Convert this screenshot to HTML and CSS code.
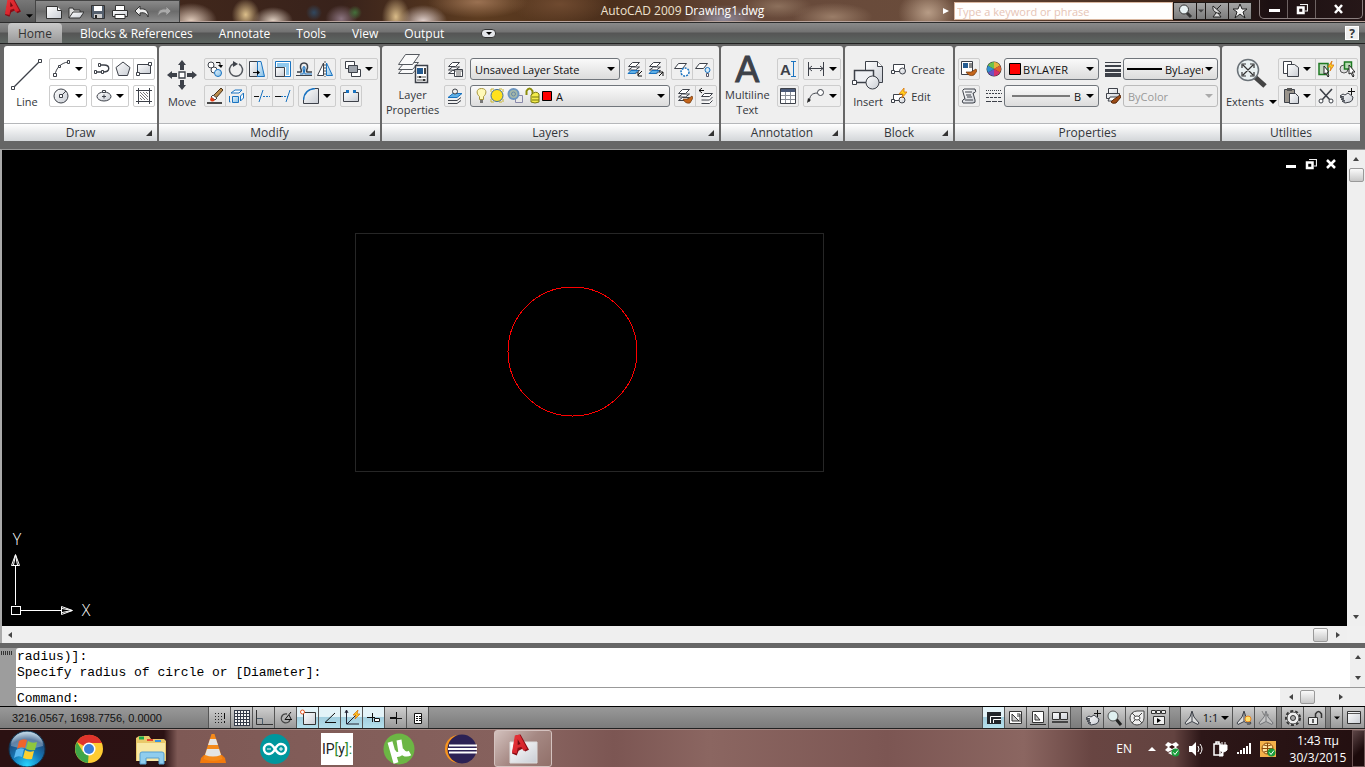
FILE: index.html
```html
<!DOCTYPE html>
<html lang="en">
<head>
    <meta charset="utf-8">
    <title>AutoCAD 2009 Drawing1.dwg</title>
    <link rel="stylesheet" href="styles.css">
</head>
<body>
    <svg width="0" height="0" class="defs">
        <defs>
            <linearGradient id="paper" x1="0" y1="0" x2="1" y2="1"><stop offset="0" stop-color="#fff"/><stop offset="1" stop-color="#c9cdd4"/></linearGradient>
            <linearGradient id="sky" x1="0" y1="0" x2="1" y2="1"><stop offset="0" stop-color="#eaf5fd"/><stop offset="1" stop-color="#7fbde6"/></linearGradient>
            <radialGradient id="orb" cx=".5" cy=".95" r=".9"><stop offset="0" stop-color="#27d6ff"/><stop offset=".45" stop-color="#1579b8"/><stop offset=".8" stop-color="#1d4a7c"/><stop offset="1" stop-color="#9fc0d6"/></radialGradient>
            <linearGradient id="red" x1="0" y1="0" x2="1" y2="1"><stop offset="0" stop-color="#e8363a"/><stop offset="1" stop-color="#d01c26"/></linearGradient>
        </defs>
        <symbol id="down" viewBox="0 0 8 4"><path d="M0 0h8L4 4z"/></symbol>
        <symbol id="layers" viewBox="0 0 16 16"><g fill="#fff" stroke="#3d4149"><path d="M1.500 12.500h7l4-3h-7z"/><path d="M1.500 9h7l4-3h-7z"/><path d="M1.500 5.500h7l4-4h-7z"/></g></symbol>
        <symbol id="hand" viewBox="0 0 16 16"><path d="M1 8l3-2 2 1 3-2 5 4q0 4-3 5l-5 1-3-2h3l-4-2h3l-4-2h4z" fill="url(#paper)" stroke="#3d4149"/><path d="M12.500 0v7M9 3.500h7" stroke="#111"/></symbol>
        <symbol id="restore" viewBox="0 0 12 12"><path d="M4 1.500h7.500V8H9" fill="none" stroke="#eee" stroke-width="1.200"/><path d="M2 4.500h5.500V10H2z" fill="none" stroke="#fff" stroke-width="2.500"/></symbol>
        <symbol id="logo" viewBox="0 0 18 22"><path d="M4 1l5-1 9 16-4 2-3-3-4 2-2 5-5-2z" fill="#8a0c14"/><path d="M3 1l5-1 8 15-4 2-2-4-4 1-1 6-5-1z" fill="url(#red)"/><path d="M6 5l3 5-3 1z" fill="#6e0a10"/></symbol>
        <symbol id="scale" viewBox="0 0 16 16"><path d="M8 1l2 6 5 6-1 1.500-6-3-6 3L1 13l5-6z" fill="#ddd" stroke="#3d4149"/><path d="M8 2v9" stroke="#3d4149"/></symbol>
    </svg>

    <header class="titlebar">
        <div class="titlebar-left">
            <button class="app-button" aria-label="Menu">
                <svg width="16" height="17" viewBox="0 3 16 17"><use href="#logo" width="16" height="20"/></svg>
                <svg class="app-arrow" width="7" height="4"><use href="#down"/></svg>
            </button>
            <div class="quick">
                <button aria-label="New"><svg width="16" height="16"><path d="M.500 2.500h11l4 4v8H.500z" fill="url(#paper)" stroke="#333"/><path d="M11.500 2.500v4h4" fill="#fff" stroke="#333"/></svg></button>
                <button aria-label="Open"><svg width="16" height="16"><path d="M1 14V4h4l1 2h6v2" fill="#ddd" stroke="#333"/><path d="M1 14l4-6h11l-4 6z" fill="url(#paper)" stroke="#333"/></svg></button>
                <button aria-label="Save"><svg width="16" height="16"><path d="M1.500 1.500h13v13H3l-1.500-1.500z" fill="#55606e" stroke="#333"/><path d="M4 2h8v5H4z" fill="#fff"/><path d="M4 10h8v4H4z" fill="#ccc"/><path d="M5 11h2v3H5z" fill="#222"/></svg></button>
                <button aria-label="Print"><svg width="16" height="16"><path d="M3.500 6V1.500h9V6" fill="#fff" stroke="#333"/><path d="M.500 6.500h15v6H.500z" fill="url(#paper)" stroke="#333"/><path d="M3 10.500h10v4H3z" fill="#fff" stroke="#333"/></svg></button>
                <button aria-label="Undo"><svg width="16" height="16"><path d="M6 2v3c6-1 9 3 8 8-1-3-3-5-8-4v3L1 7z" fill="#eee" stroke="#333"/></svg></button>
                <button aria-label="Redo"><svg width="16" height="16"><path d="M10 2v3C4 4 1 8 2 13c1-3 3-5 8-4v3l5-5z" fill="#aaa" stroke="#777"/></svg></button>
            </div>
        </div>
        <h1 class="title">AutoCAD 2009 <span>Drawing1.dwg</span></h1>
        <div class="titlebar-right">
            <svg width="6" height="8" class="search-arrow"><path d="M0 1l6 3-6 3z" fill="#fff"/></svg>
            <input class="search" type="text" placeholder="Type a keyword or phrase" aria-label="Type a keyword or phrase">
            <div class="info-tools">
                <button aria-label="Search"><svg width="16" height="16"><path d="M9 9l5 5" stroke="#333" stroke-width="3"/><circle cx="7" cy="6.500" r="4.500" fill="#e8f2f4" stroke="#333"/></svg></button>
                <button class="narrow" aria-label="Search options"><svg width="6" height="4"><use href="#down" fill="#444"/></svg></button>
                <button aria-label="Communication Center"><svg width="16" height="16"><path d="M4 3c-1 5 3 8 8 7zM7 10l-3 4h8l-3-4M8 6l4-4" fill="#ddd" stroke="#222"/></svg></button>
                <button aria-label="Favorites"><svg width="16" height="16"><path d="M8 1l2 5h5l-4 3 2 6-5-4-5 4 2-6-4-3h5z" fill="#f4f4f4" stroke="#222"/></svg></button>
            </div>
            <div class="window-controls">
                <button aria-label="Minimize"><svg width="12" height="12"><path d="M1 6h11v3H1z" fill="#fff"/></svg></button>
                <button aria-label="Restore"><svg width="12" height="12"><use href="#restore"/></svg></button>
                <button class="close" aria-label="Close"><svg width="12" height="12"><path d="M2 2l7 8M9 2l-7 8" stroke="#fff" stroke-width="2.500"/></svg></button>
            </div>
        </div>
    </header>

    <nav class="tabs">
        <a class="active" href="#home">Home</a>
        <a href="#blocks">Blocks &amp; References</a>
        <a href="#annotate">Annotate</a>
        <a href="#tools">Tools</a>
        <a href="#view">View</a>
        <a href="#output">Output</a>
        <button class="pill" aria-label="Minimize ribbon"><svg width="6" height="3"><use href="#down"/></svg></button>
        <button class="help" aria-label="Help">?</button>
    </nav>

    <main class="ribbon">
        <section class="panel white">
            <div class="panel-body">
                <button class="big"><svg width="34" height="34"><path d="M4 29L29 4" stroke="#3d4149" stroke-width="1.300"/><path d="M1.500 28.500h3v3h-3zM28.500 1.500h3v3h-3z" fill="#fff" stroke="#3d4149"/></svg>Line</button>
                <div class="rows">
                    <div class="row">
                        <div class="group"><button class="drop" aria-label="Arc"><svg width="18" height="18"><path d="M2 15C3 8 8 3 15 2" fill="none" stroke="#3d4149"/><path d="M.500 13.500h3v3h-3zM5.500 5.500h2v2h-2zM14.500.500h2v3h-2z" fill="#fff" stroke="#3d4149"/></svg><svg width="8" height="4"><use href="#down"/></svg></button></div>
                        <div class="group"><button aria-label="Polyline"><svg width="16" height="16"><path d="M2 11h7c8 0 7-7 1-7H7" fill="none" stroke="#3d4149" stroke-width="1.400"/><path d="M.500 9.500h2v3h-2zM7.500 9.500h2v3h-2zM4.500 2.500h2v3h-2z" fill="#fff" stroke="#3d4149"/></svg></button><button aria-label="Polygon"><svg width="16" height="16"><path d="M8 1l7 5.500-2.500 8h-9L1 6.500z" fill="url(#paper)" stroke="#3d4149"/></svg></button><button aria-label="Rectangle"><svg width="16" height="16"><path d="M1.500 3.500h13v9h-13z" fill="url(#paper)" stroke="#3d4149"/><path d="M.500 11.500h3v3h-3zM12.500 1.500h3v3h-3z" fill="#fff" stroke="#3d4149"/></svg></button></div>
                    </div>
                    <div class="row">
                        <div class="group"><button class="drop" aria-label="Circle"><svg width="18" height="18"><circle cx="8" cy="9" r="7" fill="url(#paper)" stroke="#3d4149"/><path d="M8 9l5-5" stroke="#3d4149"/><path d="M6.500 7.500h3v3h-3z" fill="#fff" stroke="#3d4149"/></svg><svg width="8" height="4"><use href="#down"/></svg></button></div>
                        <div class="group"><button class="drop" aria-label="Ellipse"><svg width="16" height="16"><ellipse cx="8" cy="8.500" rx="7" ry="4.500" fill="url(#paper)" stroke="#3d4149"/><path d="M6 8.500h4M8 6.500v4" stroke="#3d4149"/><path d="M6.500 2.500h3v2h-3z" fill="#fff" stroke="#3d4149"/></svg><svg width="8" height="4"><use href="#down"/></svg></button></div>
                        <div class="group"><button aria-label="Hatch"><svg width="16" height="16"><path d="M0 2.500h16M0 13.500h16M2.500 0v16M13.500 0v16" stroke="#3d4149"/><path d="M4 4l8 8M4 7l5 5M4 10l2 2M7 4l5 5M10 4l2 2" stroke="#777"/></svg></button></div>
                    </div>
                </div>
            </div>
            <h2>Draw<i></i></h2>
        </section>

        <section class="panel">
            <div class="panel-body">
                <button class="big"><svg width="34" height="34"><path d="M17 2l4 5h-2v5h-4V7h-2zM17 32l4-5h-2v-5h-4v5h-2zM2 17l5-4v2h5v4H7v2zM32 17l-5-4v2h-5v4h5v2z" fill="#3d4149"/><path d="M14 14h6v6h-6z" fill="#fff" stroke="#3d4149" stroke-width="1.300"/></svg>Move</button>
                <div class="rows">
                    <div class="row">
                        <div class="group"><button aria-label="Copy"><svg width="16" height="16"><circle cx="4" cy="4" r="3" fill="#fff" stroke="#3d4149"/><circle cx="7" cy="9" r="3" fill="#fff" stroke="#3d4149"/><circle cx="11" cy="12" r="3.500" fill="url(#sky)" stroke="#1a73c0"/><path d="M9 1.500h4v3" stroke="#111" fill="none"/><path d="M11 4h5l-2 3z"/></svg></button><button aria-label="Rotate"><svg width="16" height="16"><path d="M11 3a6.500 6.500 0 1 1-6 0" fill="none" stroke="#55595f" stroke-width="1.500"/><path d="M5 0l5 3-5 3z" fill="#3d4149"/></svg></button><button aria-label="Stretch"><svg width="16" height="16"><path d="M.500.500h8v15h-8z" fill="url(#paper)" stroke="#3d4149"/><path d="M8.500.500H12l3.500 15h-7z" fill="url(#sky)" stroke="#1a73c0"/><path d="M4 11.500h5" stroke="#111"/><path d="M8 9l3 2.500L8 14z"/></svg></button></div>
                        <div class="group"><button aria-label="Scale"><svg width="16" height="16"><path d="M.500.500h15v15h-15z" fill="#fff" stroke="#1a73c0"/><path d="M2 2h12v4H2zM11 6h3v8h-3z" fill="#8fc9ef"/><path d="M.500 6.500h9v9h-9z" fill="url(#paper)" stroke="#3d4149"/></svg></button><button aria-label="Offset"><svg width="16" height="16"><path d="M0 14.500h16" fill="none" stroke="#3d4149"/><path d="M1 11h4q1-1-.500-4Q4 2 8 2t3.500 5q-1.500 3-.500 4h5" fill="none" stroke="#3d4149" stroke-width="1.500"/><path d="M4 13h3q1-2 0-6 1-3 2 0-1 4 0 6h7" fill="none" stroke="#1a73c0" stroke-width="1.200"/></svg></button><button aria-label="Mirror"><svg width="16" height="16"><path d="M6.500 2v12.500H.500z" fill="#fff" stroke="#3d4149"/><path d="M9.500 2v12.500h6z" fill="url(#sky)" stroke="#1a73c0"/><path d="M8 0v16" stroke="#555" stroke-dasharray="2 1"/></svg></button></div>
                        <div class="group"><button class="drop" aria-label="Draw order"><svg width="16" height="16"><path d="M.500.500h9v7h-9zM6.500 8.500h9v7h-9z" fill="#fff" stroke="#3d4149"/><path d="M3.500 4.500h9v7h-9z" fill="#9da3ab" stroke="#3d4149"/></svg><svg width="8" height="4"><use href="#down"/></svg></button></div>
                    </div>
                    <div class="row">
                        <div class="group"><button aria-label="Erase"><svg width="16" height="16"><path d="M6 8l8-8 2 2-7 8z" fill="#b98a4c" stroke="#4b3418"/><path d="M6 7l4 3-2 2-4-3z" fill="#fff" stroke="#444"/><path d="M4 9l4 3q-3 3-5 0z" fill="#e23a12"/><path d="M0 15h15" stroke="#111" stroke-width="1.500"/></svg></button><button aria-label="Explode"><svg width="16" height="16"><path d="M4.500 8.500h6v6h-6z" fill="url(#sky)" stroke="#1a73c0"/><path d="M3 5l4-3h7l-3 3zM12.500 8l3-3v5l-3 3zM1.500 8v6h1" fill="#f4faff" stroke="#1a73c0"/></svg></button></div>
                        <div class="group"><button aria-label="Trim"><svg width="16" height="16"><path d="M0 8.500h5" stroke="#111"/><path d="M9 8.500h7" stroke="#1a73c0" stroke-dasharray="2 1"/><path d="M5 14L9 2" stroke="#1a73c0"/></svg></button><button aria-label="Extend"><svg width="16" height="16"><path d="M0 8.500h6" stroke="#111"/><path d="M6 8.500h7" stroke="#1a73c0" stroke-dasharray="2 1"/><path d="M11 14l4-12" stroke="#1a73c0"/></svg></button></div>
                        <div class="group"><button class="drop" aria-label="Fillet"><svg width="16" height="16"><path d="M.500 15.500V12C1 5 5 1 12 .500h3.500v15z" fill="url(#paper)"/><path d="M.500 12C1 5 5 1 12 .500" fill="none" stroke="#1a73c0" stroke-width="1.500"/><path d="M.500 12v3.500h15V.500H12" fill="none" stroke="#3d4149"/></svg><svg width="8" height="4"><use href="#down"/></svg></button></div>
                        <div class="group"><button aria-label="Break"><svg width="16" height="16"><path d="M5 4.500H.500v9h15v-9H11" fill="url(#paper)" stroke="#3d4149"/><path d="M3 2h3v3H3zM10 2h3v3h-3z" fill="#1a73c0"/></svg></button></div>
                    </div>
                </div>
            </div>
            <h2>Modify<i></i></h2>
        </section>

        <section class="panel">
            <div class="panel-body">
                <button class="big tall"><svg width="34" height="34"><g fill="#fafafa" stroke="#55595f"><path d="M2.500 22.500h14l6-7h-14z"/><path d="M2.500 18.500h14l6-7h-14z"/><path d="M2.500 13.500h14l7-10h-14z"/></g><path d="M19.500 14.500h12v17h-12z" fill="#fff" stroke="#3d4149" stroke-width="1.500"/><path d="M21 17h6v6h-6z" fill="#245b91"/><path d="M28 17h2v6h-2z" fill="#444"/><path d="M21 26h9M21 29h9" stroke="#555"/><path d="M23 25h2v2h-2zM27 28h2v2h-2z" fill="#333"/></svg>Layer<br>Properties</button>
                <div class="rows">
                    <div class="row">
                        <div class="group"><button aria-label="Layer states manager"><svg width="16" height="16"><use href="#layers" width="16" height="16"/><path d="M7.500 8.500h8v7h-8z" fill="#fff" stroke="#3d4149"/><path d="M8 10h7M9 12h5M9 14h5" stroke="#666"/></svg></button></div>
                        <div class="combo state"><select aria-label="Layer state"><option>Unsaved Layer State</option></select><svg width="8" height="4"><use href="#down"/></svg></div>
                        <div class="group"><button aria-label="Layer isolate"><svg width="16" height="16"><use href="#layers" width="16" height="16"/><path d="M1 12.500h7l3-3H4z" fill="#5fb0e6" stroke="#1a73c0"/><path d="M15 10l-4 4M11 11v4h4" stroke="#111" fill="none"/></svg></button><button aria-label="Layer unisolate"><svg width="16" height="16"><use href="#layers" width="16" height="16"/><path d="M1 12.500h7l3-3H4z" fill="#5fb0e6" stroke="#1a73c0"/><path d="M11 15l4-4M11 11h4v4" stroke="#111" fill="none"/></svg></button></div>
                        <div class="group"><button aria-label="Freeze layer"><svg width="16" height="16"><path d="M.500 7.500h8l4-5h-8z" fill="#fff" stroke="#3d4149"/><circle cx="11" cy="11" r="4" fill="#fff" stroke="#1a73c0" stroke-width="1.500" stroke-dasharray="2 1"/></svg></button><button aria-label="Layer off"><svg width="16" height="16"><path d="M.500 7.500h8l4-5h-8z" fill="#fff" stroke="#3d4149"/><circle cx="12.500" cy="9" r="2.500" fill="#d6ebfa" stroke="#1a73c0"/><path d="M11.500 12.500h2v3h-2z" fill="#fff" stroke="#556"/></svg></button></div>
                    </div>
                    <div class="row">
                        <div class="group"><button aria-label="Make current"><svg width="16" height="16"><path d="M1 15.500h9l4-3M1 12.500h9l4-3" fill="none" stroke="#3d4149"/><path d="M1 9.500h9l5-4H6z" fill="#5fb0e6" stroke="#1a73c0"/><circle cx="8" cy="3.500" r="2.500" fill="#eee" stroke="#3d4149"/></svg></button></div>
                        <div class="combo layer">
                            <svg width="81" height="18">
                                <path d="M8.500 1.500c-6 0-5 6-2 8v3h4v-3c3-2 4-8-2-8z" fill="#fff9b8" stroke="#a8963c"/><path d="M7 13h3v3H7z" fill="#777"/>
                                <path d="M18 2h3M29 2h-3M18 15h3M29 15h-3M18 2v13M30 2v13" stroke="#c9b52b" stroke-dasharray="3 7"/><circle cx="24" cy="8.500" r="6" fill="#ffe11d" stroke="#3f6f95"/>
                                <path d="M42.500 8.500h7v7h-7z" fill="#e8e8e8" stroke="#88a"/><circle cx="40.500" cy="7" r="5" fill="#a5b8a8" stroke="#6c96c0" stroke-width="2"/><circle cx="40.500" cy="7" r="2" fill="none" stroke="#68a"/>
                                <path d="M53.500 8V4q3-5 6 0v5" fill="none" stroke="#8d8d0b" stroke-width="2"/><path d="M58 8q5-5 8-1v8q-4 2-8 0z" fill="#f4ec4b" stroke="#76760e"/><path d="M59 10h7M59 13h7" stroke="#76760e"/>
                                <path d="M69.500 4.500h9v9h-9z" fill="#f00" stroke="#000"/>
                            </svg>
                            <select aria-label="Layer"><option>A</option></select><svg width="8" height="4"><use href="#down"/></svg>
                        </div>
                        <div class="group"><button aria-label="Match layer"><svg width="16" height="16"><use href="#layers" width="16" height="16"/><path d="M6 11l5 0 4-3 1 2-3 5q-5 1-7-4z" fill="#c4651b" stroke="#6c3308" stroke-width=".7"/></svg></button><button aria-label="Layer previous"><svg width="16" height="16"><path d="M3.500 8.500h8l3-3h-8zM3.500 12h8l3-3M3.500 15.500h8l3-3" fill="#fff" stroke="#3d4149"/><path d="M1 2.500h5M4 0L1 2.500 4 5" stroke="#111" fill="none"/></svg></button></div>
                    </div>
                </div>
            </div>
            <h2>Layers<i></i></h2>
        </section>

        <section class="panel">
            <div class="panel-body">
                <button class="big tall"><span class="letter-big">A</span>Multiline<br>Text</button>
                <div class="rows">
                    <div class="row">
                        <div class="group"><button aria-label="Single line text"><span class="letter">A</span><svg width="5" height="16"><path d="M0 .500h5M2.500 0v16M0 15.500h5" stroke="#1a73c0"/></svg></button></div>
                        <div class="group"><button class="drop" aria-label="Dimension"><svg width="18" height="16"><path d="M1.500 1v14M16.500 1v14M2 7.500h14M5 5L2 7.500 5 10M13 5l3 2.500-3 2.500" stroke="#3d4149" fill="none"/></svg><svg width="8" height="4"><use href="#down"/></svg></button></div>
                    </div>
                    <div class="row">
                        <div class="group"><button aria-label="Table"><svg width="16" height="16"><path d="M.500.500h15v15h-15z" fill="#fff" stroke="#3d4149"/><path d="M1 1h14v3H1z" fill="#4b5a78"/><path d="M1 7.500h14M1 11.500h14M5.500 4v11M10.500 4v11" stroke="#8a8f98"/></svg></button></div>
                        <div class="group"><button class="drop" aria-label="Leader"><svg width="18" height="16"><path d="M2 14C3 8 4 5 11 5" fill="none" stroke="#3d4149"/><circle cx="13.500" cy="4.500" r="3" fill="#fff" stroke="#3d4149"/><path d="M0 15l1-5 3 2z" fill="#222"/></svg><svg width="8" height="4"><use href="#down"/></svg></button></div>
                    </div>
                </div>
            </div>
            <h2>Annotation<i></i></h2>
        </section>

        <section class="panel">
            <div class="panel-body">
                <button class="big"><svg width="34" height="34"><path d="M14.500 3.500h12l5 5v16h-17z" fill="url(#paper)" stroke="#3d4149"/><path d="M26.500 3.500v5h5" fill="#fff" stroke="#3d4149"/><path d="M3.500 12.500h19v12h-19z" fill="#eef0f4" stroke="#3d4149" stroke-width="1.500"/><path d="M1.500 22.500h4v4h-4z" fill="#fff" stroke="#3d4149"/><circle cx="21.500" cy="24.500" r="6.500" fill="url(#paper)" stroke="#3d4149"/></svg>Insert</button>
                <div class="links">
                    <button><svg width="16" height="16"><path d="M2.500 3.500h11v7h-11z" fill="#fff" stroke="#3d4149"/><path d="M.500 9.500h3v3h-3z" fill="#fff" stroke="#3d4149"/><circle cx="11.500" cy="10" r="3" fill="url(#paper)" stroke="#3d4149"/></svg>Create</button>
                    <button><svg width="16" height="16"><path d="M2.500 6.500h9v6h-9z" fill="#fff" stroke="#3d4149"/><path d="M.500 11.500h3v3h-3z" fill="#fff" stroke="#3d4149"/><circle cx="11" cy="12" r="3" fill="url(#paper)" stroke="#3d4149"/><path d="M13 0L8 6h4l-1 4 5-6h-3z" fill="#ffd21f" stroke="#d9730d" stroke-width=".8"/></svg>Edit</button>
                </div>
            </div>
            <h2>Block<i></i></h2>
        </section>

        <section class="panel">
            <div class="panel-body props">
                <div class="rows">
                    <div class="row">
                        <div class="group"><button aria-label="Match properties"><svg width="16" height="16"><path d="M.500.500h11v13H.500z" fill="#fff" stroke="#3d4149"/><path d="M2 2h5v5H2z" fill="#245b91"/><path d="M8 2h3v5H8z" fill="#888"/><path d="M5 11l5 0 5-3 1 2-3 4q-5 2-8-3z" fill="#c4651b" stroke="#6c3308" stroke-width=".7"/></svg></button></div>
                        <svg class="lead" width="16" height="16"><circle cx="8" cy="8" r="7.500" fill="#333"/><path d="M8 8V1a7 7 0 0 1 6 3.500z" fill="#e6b33c"/><path d="M8 8l6-3.500a7 7 0 0 1 0 7z" fill="#e0602e"/><path d="M8 8l6 3.500A7 7 0 0 1 8 15z" fill="#d4316b"/><path d="M8 8v7a7 7 0 0 1-6-3.500z" fill="#6b53c4"/><path d="M8 8l-6 3.500a7 7 0 0 1 0-7z" fill="#2f8fd0"/><path d="M8 8L2 4.500A7 7 0 0 1 8 1z" fill="#6dc14a"/></svg>
                        <div class="combo"><svg width="14" height="16"><path d="M2.500 2.500h11v11h-11z" fill="#f00" stroke="#000"/></svg><select aria-label="Color"><option>BYLAYER</option></select><svg width="8" height="4"><use href="#down"/></svg></div>
                        <svg class="lead" width="16" height="16"><path d="M0 1.500h16" stroke="#3d4149"/><path d="M0 5h16" stroke="#3d4149" stroke-width="2"/><path d="M0 9.500h16" stroke="#3d4149" stroke-width="3"/><path d="M0 14h16" stroke="#3d4149" stroke-width="4"/></svg>
                        <div class="combo"><svg width="37" height="16"><path d="M1 8h35" stroke="#000" stroke-width="2"/></svg><select aria-label="Lineweight"><option>ByLayer</option></select><svg width="8" height="4"><use href="#down"/></svg></div>
                    </div>
                    <div class="row">
                        <div class="group"><button aria-label="List"><svg width="16" height="16"><path d="M3 1h11q2 3-1 4h-1l2 7q1 3-2 3H2q-2-2 1-4h1L2 4Q1 2 3 1z" fill="url(#paper)" stroke="#3d4149"/><path d="M4 4h7M5 7h5M6 9h5M4 12h8" stroke="#3d4149"/></svg></button></div>
                        <svg class="lead" width="16" height="16"><path d="M0 2.500h16" stroke="#3d4149" stroke-dasharray="1 1"/><path d="M0 5.500h16" stroke="#3d4149" stroke-dasharray="2 1"/><path d="M0 9.500h16" stroke="#3d4149" stroke-dasharray="3 1"/><path d="M0 13.500h16" stroke="#3d4149" stroke-dasharray="5 1"/></svg>
                        <div class="combo"><svg width="65" height="16"><path d="M5 8h58" stroke="#555" stroke-width="1.500"/></svg><select class="line" aria-label="Linetype"><option>B</option></select><svg width="8" height="4"><use href="#down"/></svg></div>
                        <svg class="lead" width="16" height="16"><path d="M3.500 5V.500h9V5M1.500 5.500h13v5h-13z" fill="url(#paper)" stroke="#3d4149"/><path d="M5 9h7v4H3z" fill="#fff" stroke="#3d4149"/><path d="M8 12l7-5 1 2-5 6q-4 1-5-1z" fill="#9c4b16" stroke="#5a2a0a"/></svg>
                        <div class="combo disabled"><select aria-label="Plot style" disabled><option>ByColor</option></select><svg width="8" height="4"><use href="#down"/></svg></div>
                    </div>
                </div>
            </div>
            <h2>Properties</h2>
        </section>

        <section class="panel">
            <div class="panel-body">
                <button class="big"><svg width="34" height="34"><path d="M21 19l10 9" stroke="#444" stroke-width="5"/><circle cx="14" cy="12" r="10.500" fill="#e9f1f2" stroke="#6b7278" stroke-width="1.500"/><path d="M9 7l10 10M19 7L9 17M8 10V6h4M16 6h4v4M20 14v4h-4M12 18H8v-4" stroke="#333" stroke-width="1.200" fill="none"/></svg><span>Extents <svg width="8" height="4" class="mid"><use href="#down"/></svg></span></button>
                <div class="rows">
                    <div class="row"><div class="group"><button class="drop" aria-label="Copy clip"><svg width="16" height="16"><path d="M.500.500h8v12h-8z" fill="#fff" stroke="#3d4149"/><path d="M4.500 3.500h7l4 3v9h-11z" fill="url(#paper)" stroke="#3d4149"/></svg><svg width="8" height="4"><use href="#down"/></svg></button><button aria-label="Quick select"><svg width="16" height="16"><path d="M1 2.500h9v11H1z" fill="#c2d8c1" stroke="#1e7a22" stroke-width="1.500"/><path d="M14 0l-4 6h3l-1 4 4-6h-3z" fill="#ffd21f" stroke="#d9730d" stroke-width=".8"/><path d="M6 5v8l2-1 2 4 1-1-2-4h2z" fill="#fff" stroke="#222"/></svg></button><button aria-label="Select similar"><svg width="16" height="16"><circle cx="5" cy="8" r="4" fill="#ddd" stroke="#555"/><path d="M5.500 1h7v7h-7z" fill="#b8dcb4" stroke="#1e7a22" stroke-width="1.500"/><path d="M10 4v9l2-1 2 4 1-1-2-4h3z" fill="#fff" stroke="#222"/></svg></button></div></div>
                    <div class="row"><div class="group"><button class="drop" aria-label="Paste"><svg width="16" height="16"><path d="M1.500 1.500h10v13h-10z" fill="#9a948c" stroke="#3d4149"/><path d="M4 0h5v3H4z" fill="#555"/><path d="M6.500 5.500h6l3 3v7h-9z" fill="url(#paper)" stroke="#3d4149"/></svg><svg width="8" height="4"><use href="#down"/></svg></button><button aria-label="Cut"><svg width="16" height="16"><path d="M2 1l10 11M14 1L4 12" stroke="#3d4149" stroke-width="1.600"/><circle cx="3" cy="13" r="2" fill="#fff" stroke="#3d4149"/><circle cx="13" cy="13" r="2" fill="#fff" stroke="#3d4149"/></svg></button><button aria-label="Pan"><svg width="16" height="16"><use href="#hand"/></svg></button></div></div>
                </div>
            </div>
            <h2>Utilities</h2>
        </section>
    </main>

    <div class="workspace">
        <div class="canvas">
            <svg class="drawing" shape-rendering="crispEdges">
                <rect x="353.500" y="83.500" width="468" height="238" fill="none" stroke="#262626"/>
                <circle cx="570.500" cy="201.500" r="64.500" fill="none" stroke="#f00"/>
            </svg>
            <svg class="ucs" width="90" height="88" fill="none" stroke="#fff">
                <path d="M7.500 73V34M12 78.500h41" shape-rendering="crispEdges"/>
                <path d="M3.500 74.500h9v8h-9z" shape-rendering="crispEdges"/>
                <path d="M3.500 33.500h8l-4-11zM5.500 33l2-10 2 10M53.500 74.500v8l11-4zM54 76.500l10 2-10 2"/>
                <text x="9" y="13" class="axis">Y</text>
                <text x="78" y="84" class="axis">X</text>
            </svg>
            <div class="doc-controls">
                <button aria-label="Minimize drawing"><svg width="12" height="12"><path d="M1 7h10v3H1z" fill="#fff"/></svg></button>
                <button aria-label="Restore drawing"><svg width="12" height="12"><use href="#restore"/></svg></button>
                <button aria-label="Close drawing"><svg width="12" height="12"><path d="M2 2l8 8M10 2l-8 8" stroke="#fff" stroke-width="2.500"/></svg></button>
            </div>
        </div>
        <div class="vscroll"><svg width="6" height="4"><path d="M0 4l3-4 3 4z"/></svg><b></b><svg width="6" height="4" class="last"><path d="M0 0h6L3 4z"/></svg></div>
        <div class="hscroll"><svg width="4" height="6"><path d="M4 0v6L0 3z"/></svg><b></b><svg width="4" height="6"><path d="M0 0v6l4-3z"/></svg></div>
    </div>

    <div class="command">
        <div class="grip"></div>
        <div class="console">
            <div class="history"><p>radius)]:<br>Specify radius of circle or [Diameter]:</p>
                <div class="vscroll"><svg width="6" height="4"><path d="M0 4l3-4 3 4z"/></svg><svg width="6" height="4" class="last"><path d="M0 0h6L3 4z"/></svg></div>
            </div>
            <div class="prompt"><label for="cmd">Command:</label><input id="cmd" type="text">
                <div class="hscroll"><svg width="4" height="6"><path d="M4 0v6L0 3z"/></svg><b></b><svg width="4" height="6" class="last"><path d="M0 0v6l4-3z"/></svg></div>
            </div>
        </div>
    </div>

    <div class="status">
        <span class="coords">3216.0567, 1698.7756, 0.0000</span>
        <div class="toggles">
            <button aria-label="Snap"><svg width="16" height="16"><path d="M3 3.500h8M3 6.500h8M3 9.500h8M3 12.500h8" stroke="#222" stroke-dasharray="1 2"/><path d="M12.500 3v6M12.500 11v2" stroke="#111"/></svg></button>
            <button aria-label="Grid"><svg width="16" height="16"><path d="M0 0h16v16H0z" fill="#f4f4f4"/><path d="M.500 0v16M3.500 0v16M6.500 0v16M9.500 0v16M12.500 0v16M15.500 0v16M0 .500h16M0 3.500h16M0 6.500h16M0 9.500h16M0 12.500h16M0 15.500h16" stroke="#333a48"/></svg></button>
            <button aria-label="Ortho"><svg width="18" height="16"><path d="M1.500 0v14.500H18" stroke="#333" fill="none"/><path d="M2 8.500h5.500v6" stroke="#4a5a68" fill="none"/></svg></button>
            <button aria-label="Polar"><svg width="16" height="16"><path d="M9 4a4.500 4.500 0 1 0 3 6" fill="none" stroke="#444" stroke-width="1.300"/><path d="M13 2L7 9.500h7M11 5l2 4" stroke="#111" fill="none"/></svg></button>
            <button class="on" aria-label="Object snap"><svg width="18" height="18"><path d="M4.500 3.500h12v12h-12z" fill="url(#paper)" stroke="#333"/><circle cx="3.500" cy="3" r="2" fill="#fff" stroke="#e8531d"/></svg></button>
            <button class="on" aria-label="Object snap tracking"><svg width="16" height="16"><path d="M13 3L3 12.500h11" stroke="#111" fill="none"/></svg></button>
            <button class="on" aria-label="Dynamic UCS"><svg width="16" height="16"><path d="M2.500 1v13H15M3 14L12 5M1 3l1.500-3L4 3" stroke="#223" fill="none"/><path d="M14 0L9 5h3l-1 4 5-5h-3z" fill="#ffcb1f" stroke="#d9730d" stroke-width=".8"/></svg></button>
            <button class="on" aria-label="Dynamic input"><svg width="16" height="16"><path d="M1 7.500h8M6.500 3v9" stroke="#111"/><path d="M8.500 8.500h5v3h-5z" fill="#fff" stroke="#111"/></svg></button>
            <button aria-label="Lineweight"><svg width="16" height="16"><path d="M2 8h7" stroke="#111" stroke-width="2"/><path d="M8 8.500h6M8.500 2v12" stroke="#111"/></svg></button>
            <button aria-label="Quick properties"><svg width="16" height="16"><path d="M4.500 3.500h7v10h-7z" fill="#fff" stroke="#111"/><path d="M6 6.500h5M6 8.500h5M6 10.500h5" stroke="#111" stroke-dasharray="2 1"/></svg></button>
        </div>
        <div class="toggles push">
            <button class="on" aria-label="Model"><svg width="16" height="16"><path d="M1 2h14v12H1z" fill="#22262b"/><path d="M4.500 13V6.500H15M7.500 13V9.500H15" stroke="#fff" fill="none"/></svg></button>
            <button aria-label="Layout"><svg width="16" height="16"><path d="M1.500 1.500h12v12h-12z" fill="#fff" stroke="#333"/><path d="M4 11V4l7 7zM9 4h3M9 6h3M12 4v8" fill="#ccc" stroke="#333"/></svg></button>
            <button aria-label="Quick view layouts"><svg width="16" height="16"><path d="M2.500 1.500h11v11h-11z" fill="#fff" stroke="#333"/><path d="M5 10V4l5 6zM0 14.500h16" fill="#ccc" stroke="#333"/></svg></button>
            <button aria-label="Quick view drawings"><svg width="16" height="16"><path d="M.500 2.500h7v7h-7zM8.500 2.500h7v7h-7z" fill="url(#paper)" stroke="#333"/><path d="M0 12h16" stroke="#444" stroke-width="2"/></svg></button>
        </div>
        <div class="toggles gap">
            <button aria-label="Pan view"><svg width="16" height="16"><use href="#hand"/></svg></button>
            <button aria-label="Zoom view"><svg width="16" height="16"><path d="M9 9l5 6" stroke="#222" stroke-width="3"/><circle cx="6" cy="6" r="5" fill="#dff0f0" stroke="#555"/></svg></button>
            <button aria-label="Steering wheel"><svg width="16" height="16"><path d="M8 1h7v7a7 7 0 1 1-7-7z" fill="#eee" stroke="#444"/><ellipse cx="8" cy="8" rx="3" ry="2" fill="#fff" stroke="#444"/><path d="M3 3l3 3M13 3l-3 3M3 13l3-3M13 13l-3-3" stroke="#444"/></svg></button>
            <button aria-label="Show motion"><svg width="16" height="16"><path d="M.500.500h4v3h-4zM5.500.500h4v3h-4zM10.500.500h4v3h-4zM2.500 6.500h11v8h-11z" fill="#eee" stroke="#333"/><path d="M6 8v5l4-2.500z"/></svg></button>
        </div>
        <div class="toggles gap">
            <button class="annoscale"><svg width="16" height="16"><use href="#scale"/></svg>1:1<svg width="8" height="4"><use href="#down"/></svg></button>
            <button aria-label="Annotation visibility"><svg width="16" height="16"><use href="#scale"/><circle cx="12" cy="9" r="3" fill="#ffe36b" stroke="#e8831d"/><path d="M11 12h3v3h-3z" fill="#666"/></svg></button>
            <button aria-label="Auto scale"><svg width="16" height="16" opacity=".5"><use href="#scale"/><path d="M4 1l2 4h5" fill="none" stroke="#444"/></svg></button>
        </div>
        <div class="toggles gap small">
            <button aria-label="Workspace"><svg width="18" height="18"><circle cx="9" cy="9" r="7" fill="#eee" stroke="#333" stroke-width="2" stroke-dasharray="3 2"/><circle cx="9" cy="9" r="6" fill="#eee" stroke="#444"/><circle cx="9" cy="9" r="2.500" fill="#aaa" stroke="#333"/></svg></button>
            <button aria-label="Toolbar lock"><svg width="16" height="16"><path d="M1.500 7.500h9v7h-9z" fill="#eee" stroke="#333"/><path d="M8.500 7V4q3-5 6 0v4M6 9v4" fill="none" stroke="#333" stroke-width="1.500"/></svg></button>
        </div>
        <div class="toggles gap small">
            <button class="slim" aria-label="Status menu"><svg width="6" height="4"><use href="#down"/></svg></button>
            <button aria-label="Clean screen"><svg width="16" height="16"><path d="M1.500 1.500h13v12h-13z" fill="url(#paper)" stroke="#333"/><path d="M2 3.500h12" stroke="#555"/></svg></button>
        </div>
    </div>

    <footer class="taskbar">
        <button class="start" aria-label="Start"><svg width="38" height="38"><circle cx="19" cy="19" r="18" fill="url(#orb)" stroke="#10324d"/><path d="M3 16a16 14 0 0 1 32 0q-16 5-32 0z" fill="#fff" opacity=".3"/><path d="M11 11q4-3 8-1l-2 8q-4-2-8 1z" fill="#f0642c"/><path d="M20 11q4 3 9 1l-2 8q-4 1-9-1z" fill="#8fc63d"/><path d="M8 20q4-3 8-1l-2 8q-4-2-8 1z" fill="#5bb8f0"/><path d="M17 20q4 3 9 1l-2 8q-4 1-9-1z" fill="#fdd02f"/></svg></button>
        <div class="apps">
            <button aria-label="Chrome"><svg width="32" height="32"><circle cx="16" cy="16" r="14" fill="#fc3"/><path d="M16 16L4 9a14 14 0 0 1 25 1H16z" fill="#e0342b"/><path d="M16 16l-1 14A14 14 0 0 1 4 9l6 10z" fill="#3fa648"/><circle cx="16" cy="16" r="6.500" fill="#fff"/><circle cx="16" cy="16" r="5" fill="#3d7fd9"/></svg></button>
            <button aria-label="Explorer"><svg width="34" height="32"><path d="M2 5l3-2h10l2 3h13l2 2v20H2z" fill="#e9c96a"/><path d="M3 10h28v18H3z" fill="#f8e8a5"/><path d="M5 5h5" stroke="#1aa84a" stroke-width="3"/><path d="M13 7h6" stroke="#e84531" stroke-width="2"/><path d="M21 8h6" stroke="#3893df" stroke-width="2"/><path d="M6 31V21q0-2 2-2h20q2 0 2 2v10h-5v-6H12v6z" fill="#8fcdee" stroke="#579fcf"/></svg></button>
            <button aria-label="VLC"><svg width="32" height="32"><path d="M4 25l3-3h18l3 3 1 5H3z" fill="#f27a0d"/><path d="M14.500 1h3l8 25q-9 4-19 0z" fill="#f58a1b"/><path d="M13 6h6l2 6H11zM10 16h12l2 6q-8 3-16 0z" fill="#e4e4e4"/></svg></button>
            <button aria-label="Arduino"><svg width="32" height="32"><circle cx="16" cy="16" r="15" fill="#00979d"/><path d="M16 16c-3-5-5-5-6-5a5 5 0 0 0 0 10c2 0 4-1 6-5s4-5 6-5a5 5 0 0 1 0 10c-1 0-3 0-6-5z" fill="none" stroke="#fff" stroke-width="2.500"/><path d="M8 16h4M20 16h4M22 14v4" stroke="#fff"/></svg></button>
            <button aria-label="IPython"><span class="ipy">IP<em>[</em>y<em>]:</em></span></button>
            <button aria-label="uTorrent"><svg width="32" height="32"><circle cx="16" cy="16" r="15.500" fill="#6cb644"/><path d="M7 9l6 21M10 18q3 6 8 2l-2-13M18 17q4 6 9 3" fill="none" stroke="#fff" stroke-width="5"/></svg></button>
            <button aria-label="Eclipse"><svg width="34" height="32"><circle cx="15" cy="16" r="14" fill="#f7941e"/><circle cx="18" cy="16" r="14.500" fill="#2c2255"/><path d="M5 12.500h28M4 16h29M5 19.500h28" stroke="#fff" stroke-width="1.800"/></svg></button>
            <button class="current" aria-label="AutoCAD"><svg width="32" height="32"><path d="M3 9h27v21H3z" fill="url(#paper)" stroke="#ddd"/><use href="#logo" x="5" y="1" width="17" height="22"/></svg></button>
        </div>
        <div class="tray">
            <span class="lang">EN</span>
            <svg width="8" height="4"><path d="M0 4h8L4 0z" fill="#fff"/></svg>
            <svg width="16" height="16"><path d="M4 1l4 2 4-2 3 3-3 2 3 3-3 2-4-2-4 2-3-2 3-3-3-2zM4 12l4-2 2 2-2 2z" fill="#fff"/><path d="M8 4l3 2-3 2-3-2z" fill="#311"/><circle cx="11.500" cy="11.500" r="4" fill="#1a9c3c"/><path d="M9.500 11.500l1.500 2 3-4" stroke="#fff" fill="none"/></svg>
            <svg width="16" height="16"><path d="M1 5h3l4-4v14l-4-4H1z" fill="#fff"/><path d="M10 5q2 3 0 6M12 3q4 5 0 10" stroke="#fff" fill="none"/></svg>
            <svg width="16" height="16"><path d="M2 3h6v11H2zM4 1h3v2H4z" fill="none" stroke="#fff" stroke-width="1.500"/><path d="M8 4h7v5q-4 4-7 0zM10 1v3M13 1v3M11 10v5H7" fill="#fff" stroke="#fff"/></svg>
            <svg width="16" height="16"><path d="M2 13v-2M5 13V9M8 13V7M11 13V5M14 13V2" stroke="#fff" stroke-width="2"/></svg>
            <svg width="16" height="16"><path d="M0 0h16v16H0z" fill="#f3b14a"/><circle cx="7.500" cy="7.500" r="5.500" fill="#ffe3a0" stroke="#8a4a0a"/><path d="M2 7.500h11M7.500 2v11M4 4q4 2 7 0M4 11q4-2 7 0" stroke="#8a4a0a" fill="none"/><circle cx="11.500" cy="11.500" r="4" fill="#1a9c3c"/><path d="M9.500 11.500l1.500 2 3-4" stroke="#fff" fill="none"/></svg>
            <div class="clock">1:43 πμ<br>30/3/2015</div>
            <button class="desktop" aria-label="Show desktop"></button>
        </div>
    </footer>
</body>
</html>
```

FILE: styles.css
```css
*{
    box-sizing: border-box;
}
html,body{
    height: 100%;
}
body{
    margin: 0;
    display: flex;
    flex-direction: column;
    overflow: hidden;
    background-color: #666;
    color: #33363b;
    font-family: "Open Sans", "Noto Sans", sans-serif;
    font-size: 11px;
}
button{
    margin: 0;
    padding: 0;
    border: none;
    background: none;
    color: inherit;
    font: inherit;
    display: flex;
    align-items: center;
    justify-content: center;
}
svg{
    display: block;
    flex: none;
}
.defs{
    position: absolute;
}

/* title bar */
.titlebar{
    height: 22px;
    flex: none;
    display: grid;
    grid-template-columns: 1fr auto 1fr;
    border-bottom: 1px solid #b9a49c;
    background:
        radial-gradient(ellipse 26px 18px at 14% 100%, #e2cdbd, transparent),
        radial-gradient(ellipse 14px 16px at 18% 70%, #dcbf8a, transparent),
        radial-gradient(ellipse 20px 14px at 20% 100%, #e2d2c4, transparent),
        radial-gradient(ellipse 8px 8px at 23% 60%, #31485f, transparent),
        radial-gradient(ellipse 7px 7px at 26% 60%, #44703c, transparent),
        radial-gradient(ellipse 16px 14px at 25% 90%, #8b7480, transparent),
        radial-gradient(ellipse 14px 20px at 29% 80%, #d9bb88, transparent),
        radial-gradient(ellipse 24px 16px at 31% 100%, #e0d0cc, transparent),
        radial-gradient(ellipse 50px 16px at 35% 10%, #9a7152, transparent),
        radial-gradient(ellipse 50px 20px at 41% 20%, #6f4a30, transparent),
        radial-gradient(ellipse 40px 14px at 53% 90%, #8f8a9c, transparent),
        radial-gradient(ellipse 34px 12px at 57% 30%, #8c705c, transparent),
        radial-gradient(ellipse 40px 14px at 61% 80%, #9a7d68, transparent),
        radial-gradient(ellipse 30px 24px at 68% 60%, #b79c86, transparent),
        linear-gradient(90deg, #4a2d1c 0%, #38221b 25%, #5d3c20 35%, #4b2f1c 45%, #67493a 55%, #6a4c3b 68%, #43291c 85%, #1c1012 93%, #261718 100%);
}
.titlebar-left,.titlebar-right{
    display: flex;
}
.titlebar-right{
    justify-content: flex-end;
    align-items: center;
}
.app-button{
    width: 35px;
    align-items: flex-start;
    justify-content: space-between;
    padding: 0 2px 0 5px;
    background: linear-gradient(#777, #555);
}
.app-arrow{
    align-self: flex-end;
    margin-bottom: 4px;
}
.quick{
    display: flex;
    align-items: center;
    gap: 6px;
    padding: 0 7px 0 10px;
    background: linear-gradient(#8a8a8a, #6c6c6c 50%, #8d8d8d);
    border: 1px solid #444;
    border-bottom: none;
}
.title{
    margin: 0;
    color: #eee2cf;
    font-size: 12px;
    font-weight: normal;
    line-height: 22px;
}
.title span{
    color: #fff;
}
.search-arrow{
    margin-right: 5px;
}
.search{
    width: 219px;
    height: 18px;
    padding: 0 2px;
    border: 1px solid #d9b7a0;
    background-color: #fffefd;
    font: inherit;
}
.search::placeholder{
    color: #e6c4b6;
    opacity: 1;
}
.info-tools{
    display: flex;
    gap: 1px;
    height: 18px;
    background-color: #1d1715;
    border: 1px solid #1d1715;
}
.info-tools button{
    width: 22px;
    background: linear-gradient(#a4a4a4, #7c7c7c);
}
.info-tools .narrow{
    width: 8px;
}
.window-controls{
    display: flex;
    align-self: flex-start;
    height: 19px;
    margin: 0 2px 0 7px;
    border: 1px solid #8a7f7f;
    border-top: none;
    border-radius: 0 0 5px 5px;
}
.window-controls button{
    width: 28px;
    border-right: 1px solid #6e6363;
}
.window-controls .close{
    width: 46px;
    border-right: none;
}

/* tabs */
.tabs{
    height: 22px;
    flex: none;
    display: flex;
    align-items: stretch;
    padding: 0 6px 0 8px;
    border-bottom: 1px solid #222;
    border-top: 1px solid #2b2b2b;
    background: linear-gradient(#8a8a8a, #737373 45%, #555 50%, #5e6662);
    font-size: 12px;
}
.tabs a{
    padding: 0 13px;
    line-height: 22px;
    color: #fff;
    text-decoration: none;
}
.tabs .active{
    padding: 0 10px;
    margin-right: 5px;
    color: #333;
    background: linear-gradient(#c9c9c9, #999);
    border-radius: 4px 4px 0 0;
}
.tabs .pill{
    align-self: center;
    width: 15px;
    height: 9px;
    margin-left: 24px;
    background-color: #e4e6ea;
    border: 1px solid #333;
    border-radius: 4px;
}
.tabs .help{
    align-self: center;
    width: 14px;
    height: 14px;
    margin-left: auto;
    background-color: #eee;
    border: 1px solid #fff;
    font-weight: bold;
}

/* ribbon */
.ribbon{
    flex: none;
    display: grid;
    grid-template-columns: 153fr 221fr 337fr 122fr 108fr 265fr 138fr;
    gap: 2px;
    padding: 2px 5px 8px 4px;
    background-color: #666;
}
.panel{
    min-width: 0;
    background-color: #efefef;
    border-radius: 3px 3px 0 0;
}
.panel.white{
    background-color: #fff;
}
.panel-body{
    height: 77px;
    padding: 0 2px 0 4px;
    display: flex;
    justify-content: space-between;
}
.panel h2{
    position: relative;
    margin: 0;
    height: 18px;
    line-height: 18px;
    border-top: 1px solid #b5b7ba;
    background: linear-gradient(#fff, #d3d6d9);
    font-size: 12px;
    font-weight: normal;
    text-align: center;
}
.panel h2 i{
    position: absolute;
    right: 5px;
    bottom: 5px;
    border: solid transparent;
    border-width: 6px 0 0 6px;
    border-bottom: 6px solid #333;
    border-top: 0;
}
.big{
    flex-direction: column;
    justify-content: flex-start;
    padding-top: 12px;
    min-width: 38px;
    line-height: 15px;
}
.big svg{
    margin-bottom: 2px;
}
.big.tall{
    padding-top: 5px;
}
.big .mid{
    display: inline-block;
    margin: 0 0 2px 2px;
}
.letter-big,.letter{
    color: #3d4149;
    font-family: "Liberation Sans", Arial, sans-serif;
}
.letter-big{
    height: 36px;
    line-height: 38px;
    font-size: 36px;
    -webkit-text-stroke: 1px #3d4149;
}
.letter{
    font-size: 15px;
    font-weight: bold;
}
.rows{
    display: flex;
    flex-direction: column;
    gap: 5px;
    padding-top: 12px;
}
.row{
    display: flex;
    gap: 4px;
    height: 22px;
}
.group{
    display: flex;
    border: 1px solid #cdcdcd;
    border-radius: 2px;
}
.group button{
    width: 20px;
}
.group button+button{
    width: 21px;
    border-left: 1px solid #cdcdcd;
}
.group .drop{
    width: 36px;
    gap: 4px;
}
.links{
    display: flex;
    flex-direction: column;
    gap: 5px;
    padding: 12px 6px 0 0;
}
.links button{
    height: 22px;
    gap: 4px;
    justify-content: flex-start;
}
.combo{
    display: flex;
    align-items: center;
    min-width: 0;
    padding: 0 4px 0 2px;
    border: 1px solid #70757b;
    border-radius: 3px;
    background: linear-gradient(#fafafa, #dcdcdc);
    color: #111;
}
.combo select{
    flex: 1;
    min-width: 0;
    padding: 0 2px;
    appearance: none;
    border: none;
    background: none;
    color: inherit;
    font: inherit;
}
.combo.state{
    width: 150px;
}
.combo.layer{
    width: 200px;
}
.combo.disabled{
    color: #999;
    border-color: #bbb;
    background: #eee;
    fill: #aaa;
}
.combo.disabled select{
    opacity: 1;
}
.props{
    padding-left: 3px;
}
.props .rows{
    flex: 1;
    min-width: 0;
}
.props .row{
    gap: 2px;
}
.props .combo{
    flex: 1;
}
.lead{
    align-self: center;
    margin-left: 4px;
}

/* drawing area */
.workspace{
    flex: 1;
    min-height: 0;
    display: grid;
    grid-template-columns: 1fr 18px;
    grid-template-rows: 1fr 17px;
    border-left: 2px solid #aaa;
    border-top: 1px solid #999;
    background-color: #f0f0f0;
}
.canvas{
    position: relative;
    overflow: hidden;
    background-color: #000;
}
.drawing{
    width: 100%;
    height: 100%;
}
.ucs{
    position: absolute;
    left: 6px;
    bottom: 6px;
}
.axis{
    fill: #fff;
    stroke: none;
    text-anchor: middle;
    font-family: "Open Sans", sans-serif;
    font-size: 16px;
    font-weight: 300;
}
.doc-controls{
    position: absolute;
    top: 8px;
    right: 10px;
    display: flex;
    gap: 8px;
}
.vscroll,.hscroll{
    display: flex;
    align-items: center;
    background-color: #efefef;
    fill: #444;
}
.vscroll{
    flex-direction: column;
    padding: 7px 0;
}
.hscroll{
    padding: 0 7px 0 6px;
}
.vscroll b,.hscroll b{
    width: 15px;
    height: 14px;
    border: 1px solid #999;
    border-radius: 2px;
    background: linear-gradient(#fafafa, #c8c8c8);
}
.vscroll b{
    margin-top: 7px;
}
.workspace .hscroll b{
    margin: 0 8px 0 auto;
}
.vscroll .last{
    margin-top: auto;
}

/* command line */
.command{
    flex: none;
    height: 63px;
    display: flex;
    border-top: 5px solid #666;
    background-color: #9d9d9d;
    font-family: "Liberation Mono", monospace;
    font-size: 13px;
    color: #000;
}
.grip{
    width: 12px;
    height: 4px;
    margin: 3px 3px 0 1px;
    background: repeating-linear-gradient(90deg, #333 0 1px, transparent 1px 2px);
}
.console{
    flex: 1;
    background-color: #fff;
    border-radius: 3px 0 0 3px;
}
.history{
    display: flex;
    justify-content: space-between;
    height: 40px;
    border-bottom: 1px solid #999;
}
.history p{
    margin: 1px 0 0 1px;
    line-height: 16px;
}
.history .vscroll{
    width: 15px;
}
.prompt{
    display: flex;
    height: 18px;
    line-height: 22px;
    padding-left: 1px;
}
.prompt input{
    flex: 1;
    padding: 0;
    border: none;
    outline: none;
    font: inherit;
}
.prompt .hscroll{
    width: 85px;
    padding: 0 22px 0 9px;
}
.prompt .hscroll b{
    margin-left: 7px;
}
.prompt .last{
    margin-left: auto;
}

/* status bar */
.status{
    flex: none;
    height: 23px;
    display: flex;
    align-items: center;
    border-top: 1px solid #000;
    border-bottom: 1px solid #222;
    background: linear-gradient(#999, #7b7b7b);
    color: #111;
}
.coords{
    width: 208px;
    padding-left: 12px;
    font-family: "Liberation Sans", Arial, sans-serif;
    font-size: 11px;
}
.toggles{
    display: flex;
    gap: 1px;
    height: 100%;
    padding: 0 1px;
    background-color: #555;
}
.toggles button{
    width: 21px;
    background: linear-gradient(#cfcfcf, #999);
}
.toggles .on{
    background: linear-gradient(#e3f3f8 45%, #a3cfdf 50%, #b5e0ec);
}
.push{
    margin-left: auto;
}
.gap{
    margin-left: 10px;
}
.gap.small{
    margin-left: 4px;
}
.toggles .annoscale{
    width: 51px;
    gap: 3px;
}
.toggles .slim{
    width: 11px;
}

/* taskbar */
.taskbar{
    flex: none;
    height: 38px;
    display: flex;
    border-top: 1px solid #a58783;
    background: linear-gradient(90deg, #2b1112 0%, #2b1213 12%, #7e5955 13%, #87625e 40%, #7c5653 45%, #8b6661 52%, #7c5653 65%, #8b6661 75%, #684542 80%, #634340 86%, #2d1718 88%, #230f10 100%);
    color: #fff;
}
.start{
    width: 52px;
    padding-left: 2px;
}
.apps{
    display: flex;
    gap: 4px;
    padding-left: 8px;
}
.apps button{
    width: 58px;
}
.apps .current{
    border: 1px solid #d4c2bf;
    border-radius: 3px;
    background: linear-gradient(135deg, #d3c1bd, #a58883 50%, #917069);
}
.ipy{
    width: 32px;
    background-color: #fff;
    color: #222;
    font-family: Roboto, sans-serif;
    font-size: 14px;
    line-height: 32px;
}
.ipy em{
    color: #2c8a2c;
    font-style: normal;
}
.tray{
    display: flex;
    align-items: center;
    gap: 8px;
    margin-left: auto;
    font-size: 12px;
}
.lang{
    margin-right: 8px;
}
.clock{
    width: 60px;
    margin: 0 -4px 0 4px;
    line-height: 17px;
    text-align: center;
    white-space: nowrap;
}
.desktop{
    align-self: stretch;
    width: 13px;
    border: 1px solid #6b5353;
    background: linear-gradient(135deg, #5c4546, #1c0a0b 60%);
}
```
